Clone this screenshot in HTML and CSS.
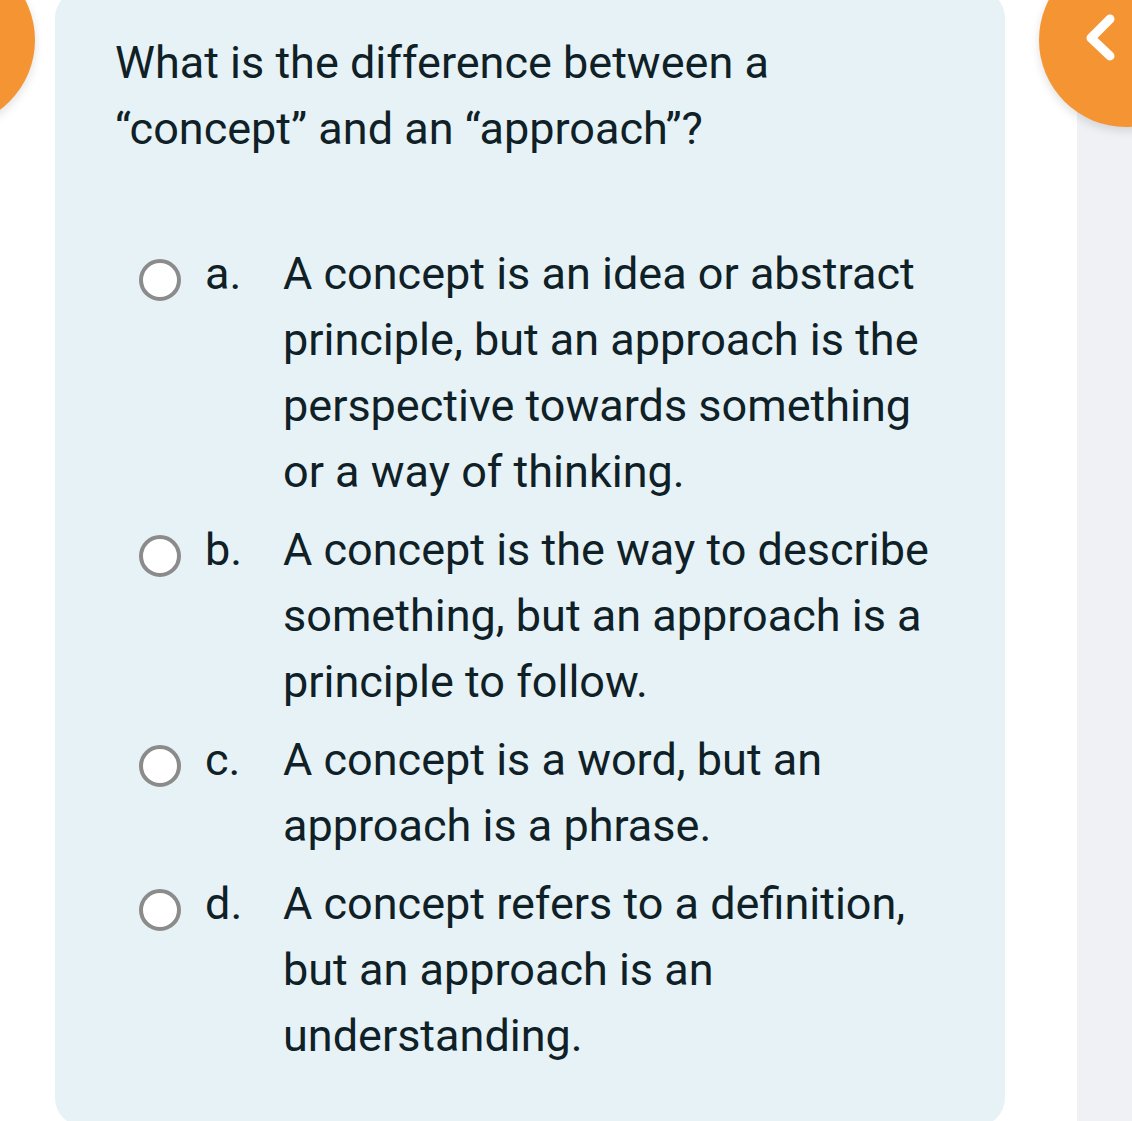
FILE: index.html
```html
<!DOCTYPE html>
<html>
<head>
<meta charset="utf-8">
<link rel="stylesheet" href="styles.css">
</head>
<body>
<div class="page">
  <main class="main">
    <section class="card">
      <h1 class="question">What is the difference between a “concept” and an “approach”?</h1>
      <ul class="options">
        <li class="option"><span class="radio"></span><span class="label">a.</span><span class="text">A concept is an idea or abstract principle, but an approach is the perspective towards something or a way of thinking.</span></li>
        <li class="option"><span class="radio"></span><span class="label">b.</span><span class="text">A concept is the way to describe something, but an approach is a principle to follow.</span></li>
        <li class="option"><span class="radio"></span><span class="label">c.</span><span class="text">A concept is a word, but an approach is a phrase.</span></li>
        <li class="option"><span class="radio"></span><span class="label">d.</span><span class="text">A concept refers to a definition, but an approach is an understanding.</span></li>
      </ul>
    </section>
  </main>
  <aside class="side"></aside>
  <div class="blob blob-left"></div>
  <button class="blob blob-right" aria-label="Back">
    <svg width="40" height="50" viewBox="0 0 40 50"><polyline points="29,6 10,25 29,43" fill="none" stroke="#fff" stroke-width="9" stroke-linecap="round" stroke-linejoin="round"/></svg>
  </button>
</div>
</body>
</html>
```

FILE: styles.css
```css
html, body {
  margin: 0;
  padding: 0;
  background: #ffffff;
  height: 100%;
  overflow: hidden;
}
body {
  font-family: Roboto, "Noto Sans", sans-serif;
  color: #0f2027;
}
.page {
  position: relative;
  display: flex;
  width: 1132px;
  height: 1121px;
  overflow: hidden;
}
.main {
  flex: 0 0 1077px;
  padding-left: 55px;
  box-sizing: border-box;
}
.card {
  width: 950px;
  box-sizing: border-box;
  margin-top: -10px;
  padding: 40px 60px 57px 60px;
  background: #e6f2f5;
  border-radius: 28px;
}
.question {
  margin: 0;
  font-size: 45px;
  line-height: 66px;
  font-weight: 400;
  letter-spacing: 0;
  width: 700px;
}
.options {
  list-style: none;
  margin: 79px 0 0 0;
  padding: 0 0 0 24px;
  display: flex;
  flex-direction: column;
  gap: 12px;
}
.option {
  display: flex;
  align-items: flex-start;
  font-size: 45px;
  line-height: 66px;
}
.radio {
  flex: 0 0 auto;
  width: 42px;
  height: 42px;
  box-sizing: border-box;
  border: 4px solid #8b8b8b;
  border-radius: 50%;
  background: #ffffff;
  margin-top: 18px;
}
.label {
  flex: 0 0 78px;
  margin-left: 24px;
}
.text {
  width: 660px;
}
.side {
  flex: 1 1 auto;
  background: #f0f1f5;
}
.blob {
  position: absolute;
  width: 174px;
  height: 174px;
  border-radius: 50%;
  background: #f59433;
  box-shadow: 0 4px 10px rgba(0, 0, 0, 0.12);
  border: none;
  padding: 0;
}
.blob-left {
  left: -139px;
  top: -47px;
}
.blob-right {
  left: 1039px;
  top: -47px;
  display: block;
}
.blob-right svg {
  position: absolute;
  left: 42px;
  top: 60px;
}
```
